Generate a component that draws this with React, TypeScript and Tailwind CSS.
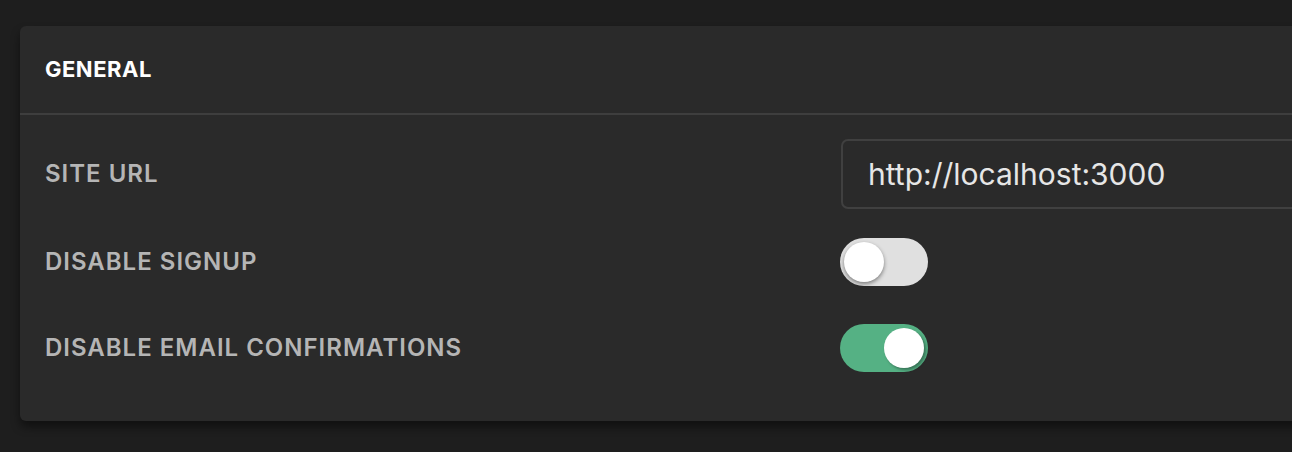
import React from "react";

function Toggle({ on }: { on: boolean }) {
  return (
    <div
      className={
        "relative h-[48px] w-[88px] rounded-full " +
        (on ? "bg-[#55b184]" : "bg-[#e0e0e0]")
      }
    >
      <div
        className={
          "absolute top-[4px] h-[40px] w-[40px] rounded-full bg-white " +
          (on ? "left-[44px] shadow-[2px_2px_3px_rgba(0,0,0,0.35)]" : "left-[4px] shadow-[0_2px_4px_rgba(0,0,0,0.45)]")
        }
      />
    </div>
  );
}

export default function App() {
  return (
    <div className="h-[452px] w-[1292px] overflow-hidden bg-[#1e1e1e] pt-[26px] pl-[20px] font-['Inter',sans-serif]">
      <div className="w-[1320px] rounded-[6px] bg-[#2a2a2a] shadow-[0_6px_10px_rgba(0,0,0,0.45)]">
        <div className="flex h-[89px] items-center border-b-2 border-[#3e3e3e] pl-[25px]">
          <span className="text-[22px] font-bold tracking-[0.5px] text-white">GENERAL</span>
        </div>
        <div className="pt-[24px] pb-[49px] pl-[25px]">
          <div className="flex h-[70px] items-center">
            <div className="w-[796px] text-[24px] font-semibold tracking-[1px] text-[#b5b5b5]">SITE URL</div>
            <div className="flex h-[70px] flex-1 items-center rounded-[7px] border-2 border-[#404040] pl-[25px] text-[30px] text-[#e6e6e6]">
              http://localhost:3000
            </div>
          </div>
          <div className="mt-[29px] flex h-[48px] items-center">
            <div className="w-[795px] text-[24px] font-semibold tracking-[1px] text-[#b5b5b5]">DISABLE SIGNUP</div>
            <Toggle on={false} />
          </div>
          <div className="mt-[38px] flex h-[48px] items-center">
            <div className="w-[795px] text-[24px] font-semibold tracking-[1px] text-[#b5b5b5]">DISABLE EMAIL CONFIRMATIONS</div>
            <Toggle on={true} />
          </div>
        </div>
      </div>
    </div>
  );
}
